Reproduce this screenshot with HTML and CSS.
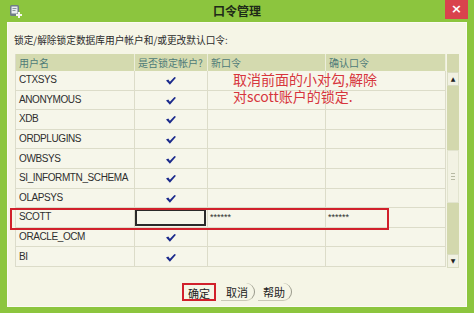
FILE: index.html
```html
<!DOCTYPE html>
<html lang="zh-CN">
<head>
  <meta charset="UTF-8">
  <title>口令管理</title>
  <link rel="stylesheet" href="styles.css">
</head>
<body>

  <div class="dialog">
    <!-- barra de titulo -->
    <div class="titlebar">
      <svg class="app-icon" width="13" height="14" viewBox="0 0 13 14">
        <rect x="1" y="1" width="9" height="11" rx="1.5" fill="#6f7d86"/>
        <rect x="2.5" y="2.5" width="6" height="7" fill="#e9eef0"/>
        <rect x="3.5" y="4" width="4" height="1" fill="#8a969c"/>
        <rect x="3.5" y="6" width="3" height="1" fill="#8a969c"/>
        <path d="M9 8 h2 v2 h2 v2 h-2 v2 h-2 v-2 h-2 v-2 h2 z" fill="#f4f8ee"/>
      </svg>
      <div class="title">口令管理</div>
      <div class="close">×</div>
    </div>

    <div class="content">
      <div class="prompt">锁定/解除锁定数据库用户帐户和/或更改默认口令:</div>

      <div class="grid-area">
        <div class="table-wrap">
          <table class="users">
            <colgroup>
              <col class="c-name">
              <col class="c-lock">
              <col class="c-pwd">
              <col class="c-conf">
            </colgroup>
            <thead>
              <tr>
                <th>用户名</th>
                <th>是否锁定帐户?</th>
                <th>新口令</th>
                <th>确认口令</th>
              </tr>
            </thead>
            <tbody>
              <tr><td>CTXSYS</td><td class="lock"><span class="tick"></span></td><td></td><td></td></tr>
              <tr><td>ANONYMOUS</td><td class="lock"><span class="tick"></span></td><td></td><td></td></tr>
              <tr><td>XDB</td><td class="lock"><span class="tick"></span></td><td></td><td></td></tr>
              <tr><td>ORDPLUGINS</td><td class="lock"><span class="tick"></span></td><td></td><td></td></tr>
              <tr><td>OWBSYS</td><td class="lock"><span class="tick"></span></td><td></td><td></td></tr>
              <tr><td>SI_INFORMTN_SCHEMA</td><td class="lock"><span class="tick"></span></td><td></td><td></td></tr>
              <tr><td>OLAPSYS</td><td class="lock"><span class="tick"></span></td><td></td><td></td></tr>
              <tr class="scott"><td>SCOTT</td><td class="lock"><div class="focus-cell"></div></td><td class="stars">******</td><td class="stars">******</td></tr>
              <tr><td>ORACLE_OCM</td><td class="lock"><span class="tick"></span></td><td></td><td></td></tr>
              <tr><td>BI</td><td class="lock"><span class="tick"></span></td><td></td><td></td></tr>
            </tbody>
          </table>

          <!-- anotaciones -->
          <div class="note">取消前面的小对勾,解除<br>对scott账户的锁定.</div>
          <div class="mark-row"></div>
        </div>

        <div class="scrollbar">
          <div class="sb-head"></div>
          <div class="sb-btn">▲</div>
          <div class="sb-track"></div>
          <div class="sb-thumb"><span class="grip"></span></div>
          <div class="sb-track sb-grow"></div>
          <div class="sb-btn">▼</div>
        </div>
      </div>

      <div class="buttons">
        <button class="btn btn-ok">确定</button>
        <button class="btn">取消</button>
        <button class="btn">帮助</button>
      </div>
    </div>
  </div>

  <script>
    // dibujar las marcas de bloqueo
    document.querySelectorAll('.tick').forEach(function (t) {
      t.innerHTML = '<svg width="10" height="8" viewBox="0 0 10 8"><polygon points="0,3.6 2.3,2.6 3.9,4.8 8.5,0 10,0.7 3.9,7.8" fill="#1b2a8c"/></svg>';
    });
  </script>

</body>
</html>
```

FILE: styles.css
```css
body {
  margin: 0;
  font-family: "Noto Sans CJK SC", "Liberation Sans", sans-serif;
}

.dialog {
  width: 474px;
  height: 313px;
  background-color: #8cc53e;
  display: flex;
  flex-direction: column;
}

.titlebar {
  height: 22px;
  display: grid;
  grid-template-columns: 1fr auto 1fr;
  align-items: start;
}

.app-icon {
  margin: 4px 0 0 9px;
}

.title {
  font-size: 12px;
  font-weight: bold;
  color: #1e2a18;
  line-height: 22px;
}

.close {
  justify-self: end;
  margin-right: 6px;
  width: 23px;
  height: 19px;
  background-color: #d9434d;
  color: #fff;
  font-family: "DejaVu Sans", sans-serif;
  font-size: 13px;
  font-weight: bold;
  line-height: 18px;
  text-align: center;
}

.content {
  margin: 0 7px 6px 7px;
  height: 285px;
  background-color: #f5f5e6;
  border: 1px solid #fbfbf2;
  box-sizing: border-box;
  padding: 10px 7px 0 7px;
}

.prompt {
  font-size: 9.7px;
  line-height: 14px;
  color: #2a2a2a;
  margin-left: -1px;
  margin-bottom: 7px;
}

.grid-area {
  display: flex;
  gap: 2px;
  height: 214px;
}

.table-wrap {
  position: relative;
  width: 430px;
}

.users {
  width: 430px;
  table-layout: fixed;
  border-collapse: collapse;
  border-left: 1px solid #dcdccb;
}

.c-name { width: 119px; }
.c-lock { width: 73px; }
.c-pwd { width: 118px; }
.c-conf { width: 120px; }

.users th {
  height: 17px;
  padding: 0 0 0 3px;
  background-color: #d4daaf;
  color: #4e7a78;
  font-size: 10px;
  line-height: 12px;
  font-weight: normal;
  text-align: left;
  white-space: nowrap;
  overflow: hidden;
  border-right: 1px solid #eceedb;
}

.users td {
  height: 18.6px;
  padding: 0 0 0 3px;
  border-bottom: 1px solid #dcdcc9;
  border-right: 1px solid #dcdcc9;
  font-family: "Liberation Sans", Arial, sans-serif;
  font-size: 10px;
  line-height: 12px;
  letter-spacing: -0.4px;
  white-space: nowrap;
  color: #2e2e2e;
  background-color: #f6f6ea;
}

.users td.lock {
  text-align: center;
  padding: 0;
}

.tick svg {
  display: block;
  margin: 2px auto 0;
}

.users td.stars {
  font-size: 9px;
  letter-spacing: 0;
  padding-left: 2px;
}

.focus-cell {
  height: 17px;
  margin: 0 1px 0 0;
  border: 2px solid #2a2a2a;
  box-sizing: border-box;
}

.note {
  position: absolute;
  left: 218px;
  top: 17px;
  font-size: 14px;
  line-height: 17px;
  color: #d7353d;
}

.mark-row {
  position: absolute;
  left: -5px;
  top: 154px;
  width: 379px;
  height: 22px;
  border: 2px solid #d1202b;
  box-sizing: border-box;
}

.scrollbar {
  width: 12px;
  display: flex;
  flex-direction: column;
  background-color: #d3d8ad;
}

.sb-head {
  height: 18px;
}

.sb-btn {
  height: 14px;
  background-color: #f1f1e2;
  border: 1px solid #d9dcc2;
  box-sizing: border-box;
  font-family: "DejaVu Sans", sans-serif;
  font-size: 6px;
  line-height: 12px;
  text-align: center;
  color: #222;
}

.sb-track {
  height: 64px;
}

.sb-grow {
  flex: 1;
}

.sb-thumb {
  height: 53px;
  background-color: #f2f2e3;
  border: 1px solid #e2e4cf;
  box-sizing: border-box;
  display: flex;
  align-items: center;
  justify-content: center;
}

.grip {
  width: 4px;
  height: 9px;
  background-image: radial-gradient(#b7b9a3 40%, transparent 45%);
  background-size: 2px 3px;
}

.buttons {
  display: flex;
  justify-content: center;
  gap: 3px;
  margin-top: 15px;
}

.btn {
  height: 18px;
  padding: 0 6px 0 5px;
  background-color: #f5f5e6;
  border: none;
  border-right: 1px solid #9a9a8c;
  border-bottom: 1px solid #c8c8b6;
  border-radius: 0 9px 9px 0;
  font-family: "Noto Sans CJK SC", sans-serif;
  font-size: 11px;
  line-height: 16px;
  color: #222;
}

.btn-ok {
  border: 2px solid #d1202b;
  border-radius: 0;
  padding: 0 4px;
  margin-right: 2px;
}
```
